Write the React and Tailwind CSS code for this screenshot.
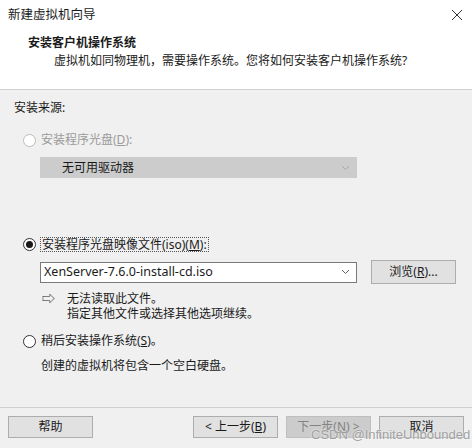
import React from 'react';

const font = "font-['Noto_Sans','Noto_Sans_CJK_SC',sans-serif]";

const Radio = ({ checked, disabled }) => (
  <span
    className={`flex items-center justify-center w-[13px] h-[13px] rounded-full border bg-white ${
      disabled ? 'border-[#bcbcbc]' : 'border-[#333333]'
    }`}
  >
    {checked && <span className="w-[7px] h-[7px] rounded-full bg-[#1a1a1a]" />}
  </span>
);

const Chevron = ({ color = '#606060' }) => (
  <svg width="9" height="6" viewBox="0 0 9 6" fill="none">
    <path d="M1 1l3.5 3.5L8 1" stroke={color} strokeWidth="1" />
  </svg>
);

const Button = ({ children, disabled, className = '' }) => (
  <div
    className={`flex items-center justify-center w-[85px] h-[22px] border text-[12px] ${
      disabled
        ? 'bg-[#cccccc] border-[#bfbfbf] text-[#838383]'
        : 'bg-[#e1e1e1] border-[#adadad] text-[#1a1a1a]'
    } ${className}`}
  >
    {children}
  </div>
);

const App = () => {
  return (
    <div className={`relative w-[474px] h-[448px] overflow-hidden bg-white text-[#1a1a1a] ${font}`}>
      {/* header */}
      <div className="h-[89px] bg-white flex flex-col">
        <div className="flex items-center justify-between h-[30px] pl-[8px] pr-[10px]">
          <span className="text-[12.5px] leading-none">新建虚拟机向导</span>
          <svg width="12" height="12" viewBox="0 0 12 12" className="mr-[1px]">
            <path d="M1 1l10 10M11 1L1 11" stroke="#333" strokeWidth="1" />
          </svg>
        </div>
        <div className="pl-[28px] mt-[7px] text-[12px] font-bold leading-none">安装客户机操作系统</div>
        <div className="pl-[54px] mt-[6px] text-[12px] leading-none">
          虚拟机如同物理机，需要操作系统。您将如何安装客户机操作系统?
        </div>
      </div>

      {/* body */}
      <div className="mr-[2px] h-[359px] bg-[#f0f0f0] border-t border-[#d0d0d0] flex flex-col text-[12px]">
        <div className="pl-[14px] mt-[10px] leading-[16px]">安装来源:</div>

        <div className="flex items-center gap-[5px] pl-[23px] mt-[16px] h-[16px] text-[#9a9a9a]">
          <Radio disabled />
          <span>
            安装程序光盘(<span className="underline">D</span>):
          </span>
        </div>

        <div className="ml-[40px] mt-[9px] w-[317px] h-[21px] bg-[#cccccc] flex items-center justify-between pl-[22px] pr-[7px]">
          <span>无可用驱动器</span>
          <Chevron color="#a8a8a8" />
        </div>

        <div className="flex items-center gap-[4px] pl-[23px] mt-[58px] h-[16px]">
          <Radio checked />
          <span className="border border-dotted border-[#555] px-[1px] leading-[13px]">
            安装程序光盘映像文件(iso)(<span className="underline">M</span>):
          </span>
        </div>

        <div className="flex items-center mt-[8px] ml-[40px]">
          <div className="w-[317px] h-[21px] bg-white border border-[#7a7a7a] flex items-center justify-between pl-[3px] pr-[6px]">
            <span className="text-[12.5px]">XenServer-7.6.0-install-cd.iso</span>
            <Chevron />
          </div>
          <Button className="ml-[14px] h-[24px]">
            浏览(<span className="underline">R</span>)...
          </Button>
        </div>

        <div className="flex pl-[42px] mt-[7px] leading-[15px]">
          <span className="w-[25px] text-[13px] leading-[15px]">⇨</span>
          <div className="flex flex-col">
            <span>无法读取此文件。</span>
            <span>指定其他文件或选择其他选项继续。</span>
          </div>
        </div>

        <div className="flex items-center gap-[5px] pl-[23px] mt-[12px] h-[16px]">
          <Radio />
          <span>
            稍后安装操作系统(<span className="underline">S</span>)。
          </span>
        </div>

        <div className="pl-[41px] mt-[9px] leading-[16px]">创建的虚拟机将包含一个空白硬盘。</div>

        <div className="mt-[33px] border-t border-[#d0d0d0] flex items-center pt-[8px] pl-[8px]">
          <Button>帮助</Button>
          <Button className="ml-[100px]">
            &lt; 上一步(<span className="underline">B</span>)
          </Button>
          <Button disabled className="ml-[8px]">
            下一步(<span className="underline">N</span>) &gt;
          </Button>
          <Button className="ml-[8px]">取消</Button>
        </div>
      </div>

      <div className="absolute left-[311px] top-[428px] whitespace-nowrap text-[13px] leading-none text-[#a0a0a0] font-['Liberation_Sans',sans-serif] [text-shadow:0_0_2px_#fff]">
        CSDN @InfiniteUnbounded
      </div>
    </div>
  );
};

export default App;
